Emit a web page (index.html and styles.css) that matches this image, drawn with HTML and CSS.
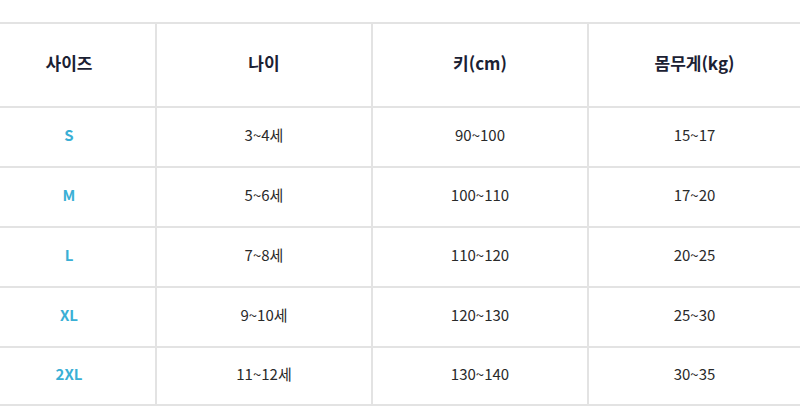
FILE: index.html
```html
<!DOCTYPE html>
<html lang="ko">
<head>
<meta charset="utf-8">
<link rel="stylesheet" href="styles.css">
</head>
<body>
<div class="size-table">
  <div class="cell head first">사이즈</div>
  <div class="cell head">나이</div>
  <div class="cell head">키(cm)</div>
  <div class="cell head">몸무게(kg)</div>

  <div class="cell first size">S</div><div class="cell">3~4세</div><div class="cell">90~100</div><div class="cell">15~17</div>
  <div class="cell first size">M</div><div class="cell">5~6세</div><div class="cell">100~110</div><div class="cell">17~20</div>
  <div class="cell first size">L</div><div class="cell">7~8세</div><div class="cell">110~120</div><div class="cell">20~25</div>
  <div class="cell first size">XL</div><div class="cell">9~10세</div><div class="cell">120~130</div><div class="cell">25~30</div>
  <div class="cell first size">2XL</div><div class="cell">11~12세</div><div class="cell">130~140</div><div class="cell">30~35</div>
</div>
</body>
</html>
```
FILE: styles.css
```css
html, body {
  margin: 0;
  padding: 0;
  background: #fff;
}
body {
  font-family: "Noto Sans CJK KR", "Noto Sans", sans-serif;
  color: #333;
}
.size-table {
  margin-top: 22px;
  width: 800px;
  display: grid;
  grid-template-columns: 155px 216px 216px 213px;
  grid-template-rows: 84px repeat(4, 60px) 58px;
  border-top: 2px solid #e3e3e3;
}
.cell {
  box-sizing: border-box;
  display: flex;
  align-items: center;
  justify-content: center;
  border-bottom: 2px solid #e3e3e3;
  border-left: 2px solid #e3e3e3;
  font-size: 15px;
  color: #2a2a2a;
  padding-bottom: 6px;
}
.cell.first {
  border-left: none;
  padding-right: 17px;
}
.cell.head {
  font-size: 17px;
  font-weight: 700;
  color: #1b2133;
  padding-bottom: 6px;
}
.cell.size {
  color: #3aafd5;
  font-weight: 700;
  font-size: 15px;
}
```
